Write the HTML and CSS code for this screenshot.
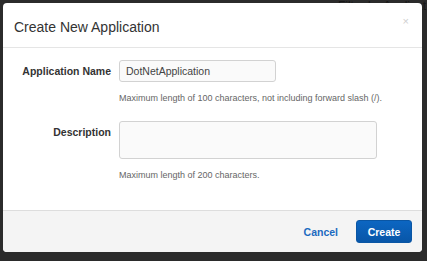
FILE: index.html
```html
<!DOCTYPE html>
<html lang="en">
<head>
  <meta charset="UTF-8" />
  <title>Create New Application</title>
  <link rel="stylesheet" href="styles.css">
</head>
<body>
  <div class="page">
    <h2 class="page-title">All Applications</h2>
    <span class="page-filter">Filter by Applicat</span>
  </div>
  <div class="modal">
    <div class="modal-header">
      <h3>Create New Application</h3>
      <span class="close">&times;</span>
    </div>
    <div class="modal-body">
      <div class="row">
        <label for="appName">Application Name</label>
        <div class="field">
          <input id="appName" type="text" value="DotNetApplication">
          <p class="help">Maximum length of 100 characters, not including forward slash (/).</p>
        </div>
      </div>
      <div class="row">
        <label for="appDesc">Description</label>
        <div class="field">
          <textarea id="appDesc"></textarea>
          <p class="help">Maximum length of 200 characters.</p>
        </div>
      </div>
    </div>
    <div class="modal-footer">
      <a href="#" class="cancel">Cancel</a>
      <button class="primary">Create</button>
    </div>
  </div>
</body>
</html>
```

FILE: styles.css
```css
body { margin: 0; background: #2b2b2b; font-family: "Liberation Sans", Arial, sans-serif; color: #333; height: 261px; overflow: hidden; position: relative; }
.page { display: flex; justify-content: space-between; padding: 0 0 0 16px; color: #161616; }
.page-title { margin: 0; font-size: 24px; line-height: 1; font-weight: normal; }
.page-filter { font-size: 12px; line-height: 1; white-space: nowrap; padding-right: 1px; }
.modal { position: absolute; left: 3px; top: 3px; width: 419px; height: 249px; background: #fff; border-radius: 4px; display: flex; flex-direction: column; overflow: hidden; }
.modal-header { height: 45px; border-bottom: 1px solid #e5e5e5; display: flex; align-items: center; padding: 3px 13px 0 11px; box-sizing: border-box; position: relative; }
.modal-header h3 { margin: 0; font-size: 14px; font-weight: normal; color: #333; }
.close { color: #cfcfcf; font-size: 11px; position: absolute; right: 13px; top: 12px; }
.modal-body { flex: 1; padding: 12px 0 0; }
.row { display: flex; align-items: flex-start; }
.row label { width: 108px; text-align: right; font-weight: bold; font-size: 10.5px; padding-top: 5px; box-sizing: border-box; color: #333; }
.field { margin-left: 8px; }
input, textarea { display: block; box-sizing: border-box; border: 1px solid #d2d2d2; border-radius: 3px; background: #fafafa; font-family: inherit; font-size: 10.5px; color: #444; margin: 0; }
input { width: 157px; height: 22px; padding: 0 6px; }
textarea { width: 258px; height: 38px; resize: none; }
.help { font-size: 9px; line-height: 10px; color: #666; margin: 11px 0 18px; }
.modal-footer { height: 42px; background: #f4f4f4; border-top: 1px solid #ddd; display: flex; align-items: center; justify-content: flex-end; padding: 0 10px 0 0; box-sizing: border-box; }
.cancel { color: #1b6ac0; font-weight: bold; font-size: 10.5px; text-decoration: none; margin-right: 18px; }
.primary { background: linear-gradient(#0c66c2, #0856a8); color: #fff; font-weight: bold; font-size: 10.5px; font-family: inherit; border: 1px solid #0a56a4; border-radius: 3px; width: 56px; height: 23px; cursor: pointer; }
```
